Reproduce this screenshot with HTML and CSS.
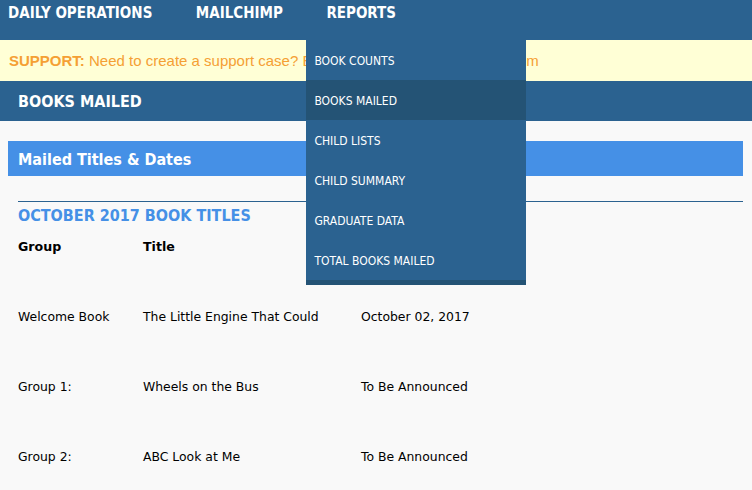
FILE: index.html
```html
<!DOCTYPE html>
<html>
<head>
<meta charset="utf-8">
<link rel="stylesheet" href="styles.css">
</head>
<body>
<nav class="topnav">
  <ul class="menu">
    <li class="menu-item">DAILY OPERATIONS</li>
    <li class="menu-item">MAILCHIMP</li>
    <li class="menu-item menu-item--open">REPORTS
      <ul class="dropdown">
        <li class="dropdown-item">BOOK COUNTS</li>
        <li class="dropdown-item dropdown-item--hover">BOOKS MAILED</li>
        <li class="dropdown-item">CHILD LISTS</li>
        <li class="dropdown-item">CHILD SUMMARY</li>
        <li class="dropdown-item">GRADUATE DATA</li>
        <li class="dropdown-item">TOTAL BOOKS MAILED</li>
      </ul>
    </li>
  </ul>
</nav>
<div class="support">
  <strong>SUPPORT:</strong> Need to create a support case? Email support@kidfoundations.com
</div>
<header class="page-title">BOOKS MAILED</header>
<main class="content">
  <h2 class="panel-title">Mailed Titles &amp; Dates</h2>
  <section class="section">
    <h3 class="section-title">OCTOBER 2017 BOOK TITLES</h3>
    <div class="table">
      <div class="row row--head">
        <div class="cell">Group</div>
        <div class="cell">Title</div>
        <div class="cell">Mail Date</div>
      </div>
      <div class="row">
        <div class="cell">Welcome Book</div>
        <div class="cell">The Little Engine That Could</div>
        <div class="cell">October 02, 2017</div>
      </div>
      <div class="row">
        <div class="cell">Group 1:</div>
        <div class="cell">Wheels on the Bus</div>
        <div class="cell">To Be Announced</div>
      </div>
      <div class="row">
        <div class="cell">Group 2:</div>
        <div class="cell">ABC Look at Me</div>
        <div class="cell">To Be Announced</div>
      </div>
    </div>
  </section>
</main>
</body>
</html>
```

FILE: styles.css
```css
html, body {
  margin: 0;
  padding: 0;
}
body {
  background: #f9f9f9;
  font-family: "DejaVu Sans", Verdana, sans-serif;
  color: #000;
  width: 752px;
  height: 490px;
  overflow: hidden;
}
.topnav {
  background: #2b6290;
  height: 40px;
  position: relative;
  z-index: 10;
}
.menu {
  list-style: none;
  margin: 0;
  padding: 0 0 0 8px;
  display: flex;
  gap: 3.5px;
}
.menu-item {
  position: relative;
  font-family: "DejaVu Sans Condensed", "DejaVu Sans", sans-serif;
  font-weight: bold;
  font-size: 15px;
  color: #fff;
  padding: 4px 20px 0;
  height: 36px;
}
.menu-item:first-child {
  margin-left: -20px;
}
.dropdown {
  position: absolute;
  top: 40px;
  left: 0;
  width: 220px;
  margin: 0;
  padding: 0 0 5px;
  list-style: none;
  background: #2b6290;
  box-shadow: inset 0 -5px 0 #245375;
}
.dropdown-item {
  height: 40px;
  line-height: 42px;
  padding-left: 8px;
  font-family: "DejaVu Sans Condensed", "DejaVu Sans", sans-serif;
  font-weight: normal;
  font-size: 12px;
  color: #fff;
}
.dropdown-item--hover {
  background: #245375;
}
.support {
  background: #ffffd6;
  height: 41px;
  line-height: 41px;
  padding-left: 9px;
  font-family: "Liberation Sans", Arial, sans-serif;
  font-size: 15px;
  color: #f5a034;
  white-space: nowrap;
}
.page-title {
  background: #2b6290;
  height: 40px;
  line-height: 41px;
  padding-left: 18px;
  color: #fff;
  font-family: "DejaVu Sans Condensed", "DejaVu Sans", sans-serif;
  font-weight: bold;
  font-size: 16px;
}
.content {
  padding: 20px 9px 0 8px;
}
.panel-title {
  margin: 0;
  background: #4590e6;
  height: 35px;
  line-height: 37px;
  padding-left: 10px;
  color: #fff;
  font-family: "DejaVu Sans Condensed", "DejaVu Sans", sans-serif;
  font-size: 16px;
  font-weight: bold;
}
.section {
  margin: 25px 0 0 10px;
  border-top: 1px solid #2b6290;
}
.section-title {
  margin: 0;
  padding-top: 4px;
  color: #4590e6;
  font-family: "DejaVu Sans Condensed", "DejaVu Sans", sans-serif;
  font-size: 16px;
  font-weight: bold;
  line-height: 20px;
}
.row {
  display: grid;
  grid-template-columns: 125px 218px 1fr;
  height: 70px;
  align-items: center;
  font-size: 12.4px;
}
.row--head {
  height: 20px;
  margin-top: 10px;
  margin-bottom: 25px;
  font-weight: bold;
  font-size: 12.6px;
}
```
